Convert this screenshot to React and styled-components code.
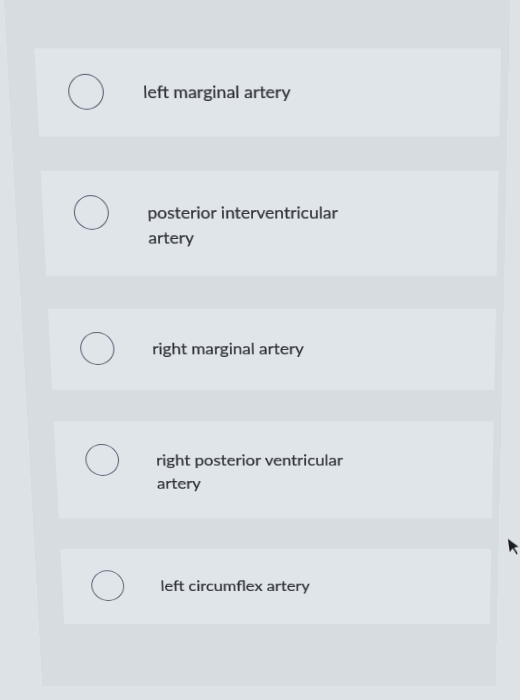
import React from "react";
import styled, { createGlobalStyle } from "styled-components";

const Global = createGlobalStyle`
  html, body { margin: 0; padding: 0; background: #dce1e6; }
  body { font-family: Lato, "Open Sans", "Liberation Sans", sans-serif; }
`;

const Page = styled.div`
  position: relative;
  width: 520px;
  height: 700px;
  overflow: hidden;
  background: #dde2e7;
`;

/* the photo looks at the screen at a slight tilt: one perspective transform */
const Panel = styled.div`
  margin-left: 4px;
  width: 506px;
  box-sizing: border-box;
  padding: 49px 8px 77px 28px;
  background: #d7dce0;
  display: flex;
  flex-direction: column;
  gap: 36px;
  transform-origin: 368px 0;
  transform: perspective(600px) rotateX(-5.2deg);
`;

const Card = styled.label`
  display: flex;
  align-items: flex-start;
  gap: 40px;
  padding: 26px 20px 28px 32px;
  background: #e0e5e9;
  cursor: pointer;
`;

const Radio = styled.span`
  flex: none;
  width: 36px;
  height: 37px;
  box-sizing: border-box;
  border: 1.8px solid #4b5469;
  border-radius: 50%;
`;

const Label = styled.span`
  margin-top: 5px;
  font-size: 18px;
  line-height: 27px;
  color: #2c3036;
  -webkit-text-stroke: 0.2px #2c3036;
  max-width: 215px;
`;

const Cursor = styled.svg`
  position: absolute;
  left: 507px;
  top: 536px;
  width: 14px;
  height: 21px;
  transform: rotate(-8deg);
`;

const options = [
  "left marginal artery",
  "posterior interventricular artery",
  "right marginal artery",
  "right posterior ventricular artery",
  "left circumflex artery",
];

export default function App() {
  return (
    <Page>
      <Global />
      <Panel>
        {options.map((o) => (
          <Card key={o}>
            <Radio />
            <Label>{o}</Label>
          </Card>
        ))}
      </Panel>
      <Cursor viewBox="0 0 12 19">
        <path
          d="M1 1 L1 15 L4.5 11.5 L7 17.5 L9 16.6 L6.6 10.8 L11 10.8 Z"
          fill="#1c1d22"
          stroke="#f2f4f6"
          strokeWidth="0.8"
        />
      </Cursor>
    </Page>
  );
}
